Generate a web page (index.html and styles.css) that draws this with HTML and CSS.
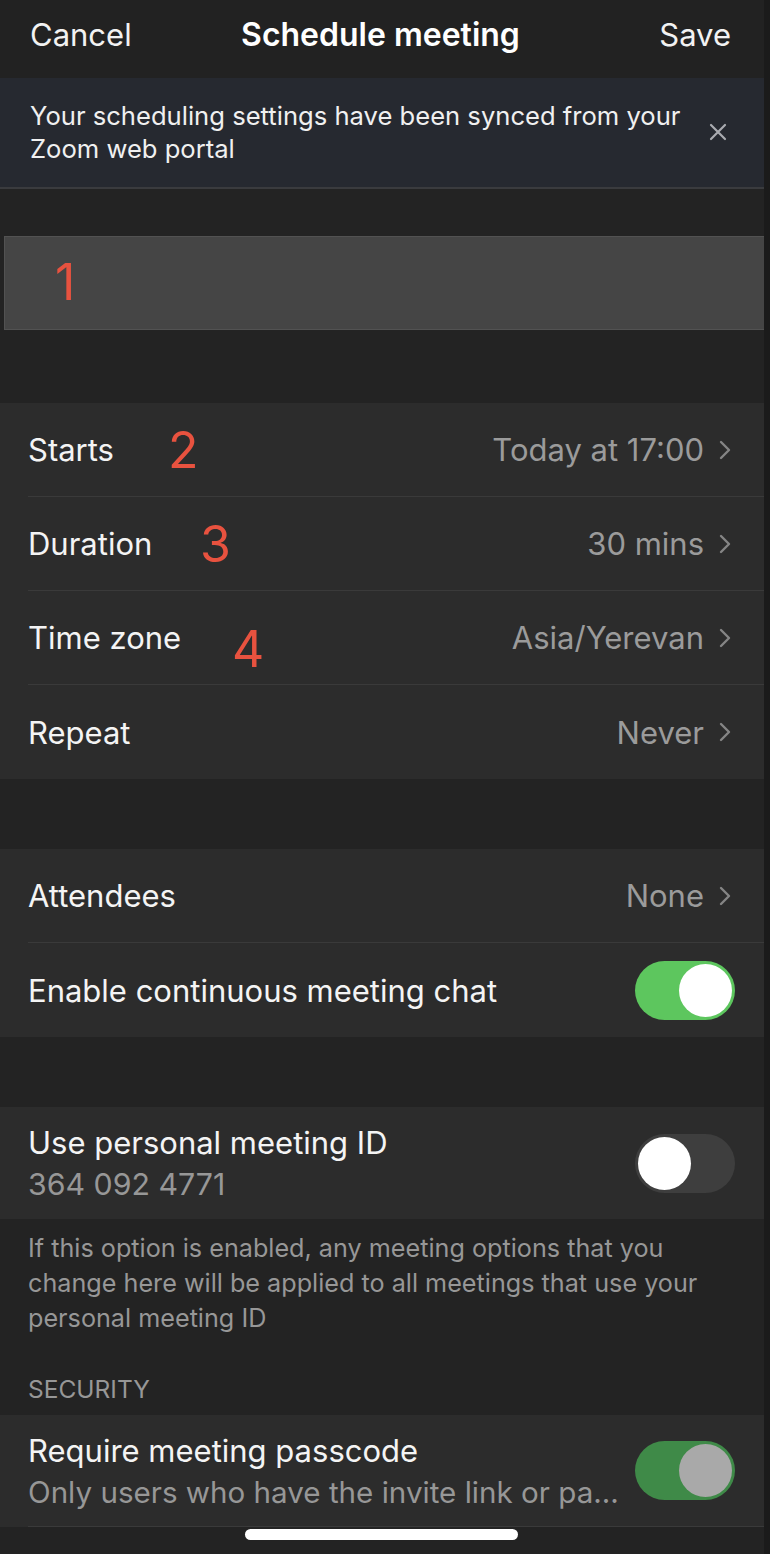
FILE: index.html
```html
<!DOCTYPE html>
<html lang="en">
<head>
  <meta charset="UTF-8">
  <meta name="viewport" content="width=device-width, initial-scale=1.0">
  <title>Schedule meeting</title>
  <link rel="stylesheet" href="styles.css">
</head>
<body>
  <div class="screen">
    <div class="topbar">
      <span class="nav-btn">Cancel</span>
      <span class="title">Schedule meeting</span>
      <span class="nav-btn">Save</span>
    </div>

    <div class="banner">
      <p>Your scheduling settings have been synced from your Zoom web portal</p>
      <svg class="close" width="20" height="20" viewBox="0 0 20 20">
        <path d="M3 3 L17 17 M17 3 L3 17" stroke="#a9abb0" stroke-width="2.2" stroke-linecap="round"/>
      </svg>
    </div>

    <div class="gap top"></div>

    <div class="topic">
      <span class="mark">1</span>
    </div>

    <div class="gap first"></div>

    <div class="group">
      <div class="row">
        <span class="label">Starts</span>
        <span class="mark m2">2</span>
        <span class="value">Today at 17:00</span>
        <svg class="chev" width="14" height="22" viewBox="0 0 14 22"><path d="M3 3 L11 11 L3 19" fill="none" stroke="#858585" stroke-width="2.4" stroke-linecap="round" stroke-linejoin="round"/></svg>
      </div>
      <div class="row">
        <span class="label">Duration</span>
        <span class="mark m3">3</span>
        <span class="value">30 mins</span>
        <svg class="chev" width="14" height="22" viewBox="0 0 14 22"><path d="M3 3 L11 11 L3 19" fill="none" stroke="#858585" stroke-width="2.4" stroke-linecap="round" stroke-linejoin="round"/></svg>
      </div>
      <div class="row">
        <span class="label">Time zone</span>
        <span class="mark m4">4</span>
        <span class="value">Asia/Yerevan</span>
        <svg class="chev" width="14" height="22" viewBox="0 0 14 22"><path d="M3 3 L11 11 L3 19" fill="none" stroke="#858585" stroke-width="2.4" stroke-linecap="round" stroke-linejoin="round"/></svg>
      </div>
      <div class="row">
        <span class="label">Repeat</span>
        <span class="value">Never</span>
        <svg class="chev" width="14" height="22" viewBox="0 0 14 22"><path d="M3 3 L11 11 L3 19" fill="none" stroke="#858585" stroke-width="2.4" stroke-linecap="round" stroke-linejoin="round"/></svg>
      </div>
    </div>

    <div class="gap"></div>

    <div class="group">
      <div class="row">
        <span class="label">Attendees</span>
        <span class="value">None</span>
        <svg class="chev" width="14" height="22" viewBox="0 0 14 22"><path d="M3 3 L11 11 L3 19" fill="none" stroke="#858585" stroke-width="2.4" stroke-linecap="round" stroke-linejoin="round"/></svg>
      </div>
      <div class="row">
        <span class="label">Enable continuous meeting chat</span>
        <span class="toggle on"><span class="knob"></span></span>
      </div>
    </div>

    <div class="gap"></div>

    <div class="group">
      <div class="row tall">
        <div class="stack">
          <span class="label">Use personal meeting ID</span>
          <span class="sub">364 092 4771</span>
        </div>
        <span class="toggle off"><span class="knob"></span></span>
      </div>
    </div>

    <p class="note">If this option is enabled, any meeting options that you change here will be applied to all meetings that use your personal meeting ID</p>

    <div class="section-title">SECURITY</div>

    <div class="group">
      <div class="row tall lined">
        <div class="stack">
          <span class="label">Require meeting passcode</span>
          <span class="sub clip">Only users who have the invite link or pa...</span>
        </div>
        <span class="toggle locked"><span class="knob"></span></span>
      </div>
      <div class="home-area">
        <span class="home-bar"></span>
      </div>
    </div>
  </div>
</body>
</html>
```

FILE: styles.css
```css
body { margin: 0; background: #1b1b1b; font-family: Inter, "Noto Sans", sans-serif; color: #fff; }
.screen { width: 764px; height: 1554px; background: #232323; overflow: hidden; }

.topbar { height: 78px; display: flex; align-items: center; justify-content: space-between; padding: 0 33px 10px 30px; box-sizing: border-box; background: #222; }
.nav-btn { font-size: 31px; color: #f2f2f2; }
.title { font-size: 32px; font-weight: 600; margin-right: 30px; }

.banner { height: 111px; box-sizing: border-box; background: #262930; border-bottom: 2px solid #3a3b3e; display: flex; align-items: center; padding: 0 36px 2px 30px; }
.banner p { margin: 0; flex: 1; font-size: 25.6px; line-height: 33px; color: #f0f0f0; padding-right: 16px; }
.close { flex: none; }

.gap { height: 69px; }
.gap.top { height: 47px; }
.gap.first { height: 73px; }

.topic { height: 94px; margin: 0 -2px 0 4px; background: #454545; border: 1px solid #525252; box-sizing: border-box; position: relative; }
.mark { position: absolute; color: #e8523f; font-size: 50px; line-height: 1; font-weight: 400; }
.topic .mark { left: 50px; top: 20px; }

.group { background: #2c2c2c; }
.group + .gap { height: 70px; }
.row { height: 94px; margin-left: 28px; padding-right: 32px; display: flex; align-items: center; border-bottom: 1px solid #3a3a3a; box-sizing: border-box; position: relative; }
.row:last-child { border-bottom: none; }
.label { font-size: 31px; color: #f4f4f4; white-space: nowrap; }
.value { margin-left: auto; font-size: 31px; color: #9b9b9b; }
.chev { margin-left: 14px; flex: none; }
.m2 { left: 140px; top: 22px; }
.m3 { left: 172px; top: 22px; }
.m4 { left: 204px; top: 33px; }

.row.tall { height: 112px; }
.row.lined { border-bottom: 1px solid #3a3a3a; }
.stack { display: flex; flex-direction: column; gap: 5px; min-width: 0; }
.sub { font-size: 30.3px; color: #979797; white-space: nowrap; }
.sub.clip { font-size: 29.6px; }

.toggle { margin-left: auto; margin-right: -3px; width: 100px; height: 59px; border-radius: 30px; display: flex; align-items: center; padding: 3px; box-sizing: border-box; flex: none; }
.knob { width: 53px; height: 53px; border-radius: 50%; background: #fff; }
.toggle.on { background: #5dc65e; justify-content: flex-end; }
.toggle.off { background: #3e3e3e; justify-content: flex-start; }
.toggle.locked { background: #3f8a48; justify-content: flex-end; }
.toggle.locked .knob { background: #a9a9a9; }

.note { margin: 0; padding: 12px 40px 0 28px; font-size: 25.2px; line-height: 35px; color: #979797; }
.section-title { padding: 38px 28px 0; height: 41px; font-size: 24.5px; color: #979797; }

.home-area { height: 27px; display: flex; justify-content: center; background: #232323; }
.home-bar { width: 273px; height: 11px; border-radius: 6px; background: #fff; margin-left: -2px; margin-top: 2px; }
```
